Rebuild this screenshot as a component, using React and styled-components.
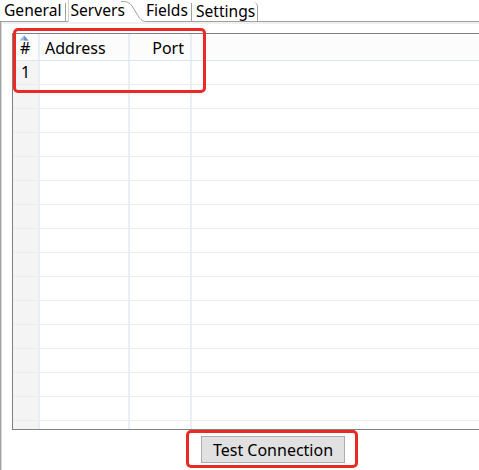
import React from 'react';
import styled, { createGlobalStyle } from 'styled-components';

const Global = createGlobalStyle`
  html, body { margin: 0; padding: 0; background: #fff; }
  body { font-family: "Noto Sans", "Open Sans", sans-serif; font-size: 15px; color: #000; }
`;

const Window = styled.div`
  position: relative;
  width: 479px;
  height: 470px;
  display: flex;
  flex-direction: column;
  overflow: hidden;
  background: #fff;
`;

const TabBar = styled.div`
  display: flex;
  flex: none;
  height: 22px;
  font-size: 15.6px;
  background: linear-gradient(#a0a0a0, #a0a0a0) left bottom / 100% 1px no-repeat;
`;

const Tab = styled.div`
  height: 21px;
  line-height: 20px;
  padding: 0 ${p => p.$pr}px 0 ${p => p.$pl}px;
  white-space: nowrap;
`;

const LastTab = styled(Tab)`
  margin-top: 2px;
  height: 19px;
  line-height: 18px;
  border-right: 1px solid #a0a0a0;
  border-top-right-radius: 5px;
`;

const Divider = styled.span`
  width: 1px;
  margin-top: 3px;
  height: 19px;
  background: #a0a0a0;
`;

const ActiveTab = styled.div`
  display: flex;
  height: 22px;
  margin-left: 2px;
  background: #fff;
  border-left: 1px solid #cfcfcf;
  padding-left: 1px;
  line-height: 20px;
  white-space: nowrap;
`;

const Curve = styled.svg`
  flex: none;
  margin-left: -4px;
`;

const Panel = styled.div`
  flex: 1;
  display: flex;
  flex-direction: column;
  border-left: 1px solid #a0a0a0;
  box-shadow: inset 1px 0 #dcdcdc, inset 0 2px #f0f0f0;
  padding: 11px 0 0 11px;
  overflow: hidden;
`;

const Content = styled.div`
  width: 522px;
  display: flex;
  flex-direction: column;
  font-size: 16px;
`;

const Table = styled.div`
  height: 397px;
  box-sizing: border-box;
  border: 1px solid #808080;
  display: flex;
  flex-direction: column;
  overflow: hidden;
`;

const Row = styled.div`
  display: grid;
  grid-template-columns: 27px 90px 62px 1fr;
  flex: none;
  height: ${p => (p.$head ? 27 : 24)}px;
  box-sizing: border-box;
  border-bottom: 1px solid ${p => (p.$head ? '#dce6f4' : '#ececec')};
  background: ${p => (p.$head ? '#fcfcfc' : '#fff')};
`;

const Cell = styled.div`
  position: relative;
  box-sizing: border-box;
  border-right: ${p => (p.$last ? 'none' : '2px solid #e8edf6')};
  background: ${p => (p.$num ? '#f4f4f4' : 'transparent')};
  padding: ${p => (p.$head ? '3px' : '0')} ${p => p.$pr || 0}px 0 ${p => p.$pl || 0}px;
  text-align: ${p => (p.$right ? 'right' : 'left')};
  line-height: ${p => (p.$head ? 22 : 23)}px;
  white-space: nowrap;
`;

const SortArrow = styled.svg`
  position: absolute;
  left: 6px;
  top: 1px;
`;

const Body = styled.div`
  flex: 1;
  display: flex;
  flex-direction: column;
  overflow: hidden;
`;

const ButtonRow = styled.div`
  display: flex;
  justify-content: center;
  margin-top: 6px;
`;

const Button = styled.button`
  width: 144px;
  height: 27px;
  box-sizing: border-box;
  background: #e1e1e1;
  border: 1px solid #adadad;
  border-radius: 0;
  font-family: inherit;
  font-size: 16px;
  color: #000;
  padding: 0;
  line-height: 24px;
`;

const Mark = styled.div`
  position: absolute;
  box-sizing: border-box;
  border: 3px solid #ec2a24;
  border-radius: 5px;
  pointer-events: none;
  left: ${p => p.$x}px;
  top: ${p => p.$y}px;
  width: ${p => p.$w}px;
  height: ${p => p.$h}px;
`;

export default function App() {
  const rows = Array.from({ length: 16 }, (_, i) => i);
  return (
    <>
      <Global />
      <Window>
        <TabBar>
          <Tab $pl={4} $pr={4}>General</Tab>
          <Divider />
          <ActiveTab>
            <span>Servers</span>
            <Curve width="25" height="22" viewBox="0 0 25 22">
              <path d="M0 1.5 C6 1.5 8 2 11 6 L16 14 C19 19 21 21.5 25 21.5" fill="none" stroke="#a0a0a0" strokeWidth="1" />
            </Curve>
          </ActiveTab>
          <Tab $pl={0} $pr={3}>Fields</Tab>
          <Divider />
          <LastTab $pl={4} $pr={2}>Settings</LastTab>
        </TabBar>
        <Panel>
          <Content>
            <Table>
              <Row $head>
                <Cell $head $pl={7}>
                  <SortArrow width="10" height="6" viewBox="0 0 10 6">
                    <path d="M5 0.5 L9.5 5.5 L0.5 5.5 Z" fill="#9cbbe0" />
                    <path d="M5 0.5 L9.5 5.5 L5 5.5 Z" fill="#6f93c2" />
                  </SortArrow>
                  #
                </Cell>
                <Cell $head $pl={5}>Address</Cell>
                <Cell $head $right $pr={6}>Port</Cell>
                <Cell $head $last />
              </Row>
              <Body>
                {rows.map(i => (
                  <Row key={i}>
                    <Cell $num $pl={8}>{i === 0 ? '1' : ''}</Cell>
                    <Cell />
                    <Cell />
                    <Cell $last />
                  </Row>
                ))}
              </Body>
            </Table>
            <ButtonRow>
              <Button>Test Connection</Button>
            </ButtonRow>
          </Content>
        </Panel>
        <Mark $x={13} $y={28} $w={193} $h={65} />
        <Mark $x={186} $y={430} $w={172} $h={38} />
      </Window>
    </>
  );
}
